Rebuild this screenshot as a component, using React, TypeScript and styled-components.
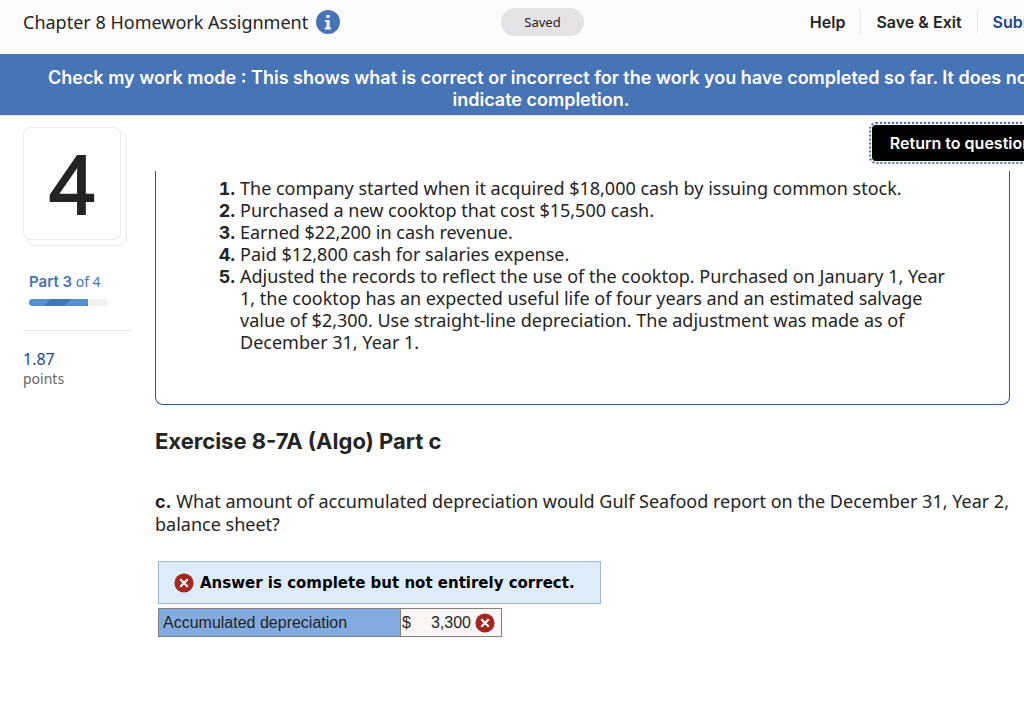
import React from 'react';
import styled, { createGlobalStyle } from 'styled-components';

const BODY_FONT = '"Noto Sans", sans-serif';
const BOLD_FONT = 'Inter, sans-serif';

const GlobalStyle = createGlobalStyle`
  *, *::before, *::after { box-sizing: border-box; }
  body {
    margin: 0;
    background: #fff;
    color: #242424;
    font: 400 18px/22px ${BODY_FONT};
    overflow-x: hidden;
  }
  button {
    margin: 0;
    border: 0;
    cursor: pointer;
  }
`;

const Header = styled.header`
  display: grid;
  grid-template-columns: 1fr auto 1fr;
  align-items: center;
  min-width: 1082px;
  height: 54px;
  padding: 0 20px 10px 23px;
  background: #fcfcfd;
`;

const TitleGroup = styled.div`
  display: flex;
  align-items: center;
  gap: 8px;
`;

const Title = styled.h1`
  margin: 0;
  font: 400 18px/22px ${BODY_FONT};
`;

const InfoButton = styled.button`
  display: flex;
  padding: 0;
  background: none;
`;

const SavedPill = styled.span`
  padding: 4px 23px;
  border-radius: 14px;
  background: #e4e2e5;
  font-size: 13px;
  line-height: 20px;
`;

const Nav = styled.nav`
  display: flex;
  justify-content: flex-end;
`;

const NavButton = styled.button<{ $accent?: boolean }>`
  padding: 0 15px;
  background: none;
  color: ${(p) => (p.$accent ? '#1f4788' : '#242424')};
  font: 600 16px/24px ${BOLD_FONT};

  & + & {
    border-left: 1px solid #e8e8ea;
  }
`;

const Banner = styled.p`
  min-width: 1082px;
  margin: 0;
  padding: 13px 40px 4px;
  border-bottom: 1px solid #dfe7f4;
  background: #4774b4;
  color: #fff;
  font: 600 18px/22px ${BOLD_FONT};
  text-align: center;
`;

const Layout = styled.div`
  display: grid;
  grid-template-columns: 108px minmax(0, 1fr);
  column-gap: 24px;
  padding: 0 14px 0 23px;
`;

const Sidebar = styled.aside`
  padding-top: 11px;
`;

const QuestionCard = styled.div`
  position: relative;
  z-index: 0;
  width: 98px;
  height: 113px;
  border: 1px solid #ececec;
  border-radius: 8px;
  background: #fff;
  color: #242424;
  font: 400 80px/110px ${BODY_FONT};
  -webkit-text-stroke: 2px #242424;
  text-align: center;

  &::before {
    content: '';
    position: absolute;
    z-index: -2;
    inset: 3px -7px -7px 3px;
    border: 1px solid #ececec;
    border-radius: 8px;
  }

  &::after {
    content: '';
    position: absolute;
    z-index: -1;
    inset: -1px;
    border: 1px solid #ececec;
    border-radius: 8px;
    background: #fff;
  }
`;

const PartProgress = styled.div`
  padding: 31px 23px 0 6px;
`;

const PartLabel = styled.div`
  color: #4774b4;
  font-size: 14px;
  line-height: 22px;

  b {
    font: 600 15px/22px ${BOLD_FONT};
  }
`;

const Track = styled.div`
  height: 7px;
  margin-top: 6px;
  border-radius: 4px;
  background: #f2f2f2;
  overflow: hidden;
`;

const Fill = styled.div`
  height: 7px;
  background: repeating-linear-gradient(135deg, #5590d2 0 15px, #4176b9 15px 30px);
`;

const Points = styled.div`
  margin-top: 24px;
  padding-top: 18px;
  border-top: 1px solid #e8e8e8;
  color: #666;
  font-size: 14px;
  line-height: 20px;

  strong {
    display: block;
    color: #1f4788;
    font-size: 16px;
    font-weight: 400;
  }
`;

const ActionRow = styled.div`
  display: flex;
  justify-content: flex-end;
  align-items: flex-start;
  height: 55px;
  margin-right: -40px;
  padding-top: 9px;
`;

const ReturnButton = styled.button`
  height: 36px;
  padding: 0 18px;
  border-radius: 4px;
  outline: 2px dotted #4774b4;
  outline-offset: 1px;
  background: #000;
  color: #fff;
  font: 600 16px/22px ${BOLD_FONT};
  white-space: nowrap;
`;

const Scenario = styled.section`
  padding: 6px 60px 51px 84px;
  border: 1px solid #2b5797;
  border-top: 0;
  border-radius: 0 0 8px 8px;
`;

const EventList = styled.ol`
  margin: 0;
  padding: 0;

  li::marker {
    font-family: ${BOLD_FONT};
    font-weight: 700;
  }
`;

const ExerciseTitle = styled.h2`
  margin: 23px 0 36px;
  font: 700 22px/26px ${BOLD_FONT};
`;

const Question = styled.p`
  margin: 0;

  b {
    font-family: ${BOLD_FONT};
  }
`;

const Answer = styled.div`
  margin: 26px 0 0 3px;
`;

const Alert = styled.div`
  display: flex;
  align-items: center;
  gap: 6px;
  width: fit-content;
  height: 43px;
  padding: 0 25px 0 15px;
  border: 1px solid #9cbbdc;
  background: #deebf9;
  color: #000;
  font: 700 15px/20px "DejaVu Sans", sans-serif;
`;

const AnswerTable = styled.table`
  margin-top: 4px;
  border-collapse: collapse;
  color: #242424;
  font: 400 16px/20px "Liberation Sans", sans-serif;

  th,
  td {
    height: 28px;
    border: 1px solid #808080;
    padding: 0 4px;
  }

  th {
    width: 242px;
    background: #83abe0;
    font-weight: 400;
    text-align: left;
  }

  td {
    width: 101px;
    padding: 0 6px 0 1px;
    background: #fcf5f5;
  }
`;

const Amount = styled.span`
  display: flex;
  align-items: center;
  gap: 4px;
`;

const Currency = styled.span`
  flex: 1;
`;

const InfoIcon = () => (
  <svg width="24" height="24" viewBox="0 0 24 24" aria-hidden="true">
    <circle cx="12" cy="12" r="12" fill="#4774b4" />
    <path
      fill="#f0f4fa"
      d="M10.4 5h3.2v3h-3.2zM9 10h4.7v7.6h1.4v2H8.8v-2h1.7V12H9z"
    />
  </svg>
);

const WrongIcon = () => (
  <svg width="20" height="20" viewBox="0 0 20 20" role="img" aria-label="incorrect">
    <circle cx="10" cy="10" r="9.6" fill="#a42822" />
    <path d="M6.3 6.3l7.4 7.4M13.7 6.3l-7.4 7.4" stroke="#fff" strokeWidth="2" fill="none" />
  </svg>
);

const EVENTS = [
  'The company started when it acquired $18,000 cash by issuing common stock.',
  'Purchased a new cooktop that cost $15,500 cash.',
  'Earned $22,200 in cash revenue.',
  'Paid $12,800 cash for salaries expense.',
  'Adjusted the records to reflect the use of the cooktop. Purchased on January 1, Year 1, the cooktop has an expected useful life of four years and an estimated salvage value of $2,300. Use straight-line depreciation. The adjustment was made as of December 31, Year 1.',
];

const PART = 3;
const PART_COUNT = 4;

export default function App() {
  return (
    <>
      <GlobalStyle />
      <Header>
        <TitleGroup>
          <Title>Chapter 8 Homework Assignment</Title>
          <InfoButton type="button" aria-label="Assignment information">
            <InfoIcon />
          </InfoButton>
        </TitleGroup>
        <SavedPill>Saved</SavedPill>
        <Nav>
          <NavButton type="button">Help</NavButton>
          <NavButton type="button">Save &amp; Exit</NavButton>
          <NavButton type="button" $accent>
            Submit
          </NavButton>
        </Nav>
      </Header>
      <Banner>
        Check my work mode : This shows what is correct or incorrect for the work you have
        completed so far. It does not indicate completion.
      </Banner>
      <Layout>
        <Sidebar>
          <QuestionCard>4</QuestionCard>
          <PartProgress>
            <PartLabel>
              <b>Part {PART}</b> of {PART_COUNT}
            </PartLabel>
            <Track>
              <Fill style={{ width: `${(PART / PART_COUNT) * 100}%` }} />
            </Track>
          </PartProgress>
          <Points>
            <strong>1.87</strong>
            points
          </Points>
        </Sidebar>
        <main>
          <ActionRow>
            <ReturnButton type="button">Return to question</ReturnButton>
          </ActionRow>
          <Scenario>
            <EventList>
              {EVENTS.map((event) => (
                <li key={event}>{event}</li>
              ))}
            </EventList>
          </Scenario>
          <ExerciseTitle>Exercise 8-7A (Algo) Part c</ExerciseTitle>
          <Question>
            <b>c.</b> What amount of accumulated depreciation would Gulf Seafood report on the
            December 31, Year 2, balance sheet?
          </Question>
          <Answer>
            <Alert>
              <WrongIcon />
              Answer is complete but not entirely correct.
            </Alert>
            <AnswerTable>
              <tbody>
                <tr>
                  <th scope="row">Accumulated depreciation</th>
                  <td>
                    <Amount>
                      <Currency>$</Currency>
                      3,300
                      <WrongIcon />
                    </Amount>
                  </td>
                </tr>
              </tbody>
            </AnswerTable>
          </Answer>
        </main>
      </Layout>
    </>
  );
}
